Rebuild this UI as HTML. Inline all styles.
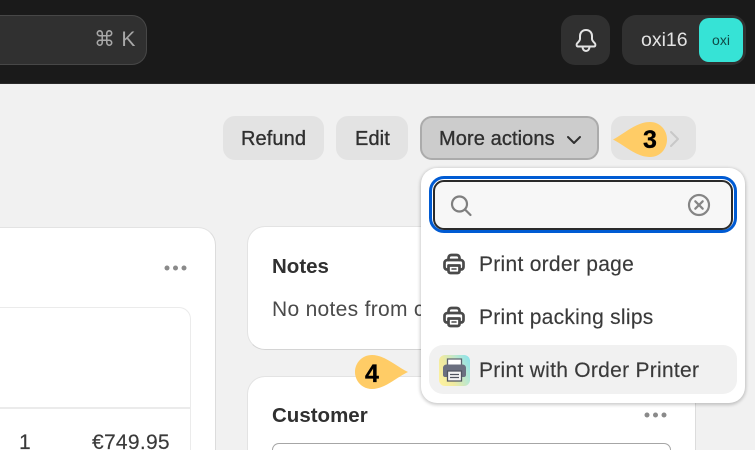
<!DOCTYPE html>
<html><head><meta charset="utf-8">
<style>
html,body{margin:0;padding:0;width:755px;height:450px;overflow:hidden;}
body{background:#f1f1f1;font-family:"Liberation Sans",sans-serif;color:#303030;}
#p{position:absolute;left:0;top:0;width:755px;height:450px;overflow:hidden;background:#f1f1f1;}
.a{position:absolute;box-sizing:border-box;}
.t{position:absolute;white-space:nowrap;line-height:24px;font-size:20px;}
.m{font-size:21px;letter-spacing:.28px;color:#3a3a3a;-webkit-text-stroke:.15px #3a3a3a;}
.b{font-size:20px;letter-spacing:.1px;-webkit-text-stroke:.35px #303030;}
.btn{position:absolute;box-sizing:border-box;top:116px;height:44px;border-radius:12px;background:#e3e3e3;}
.card{position:absolute;box-sizing:border-box;background:#fff;border:1px solid #e3e3e3;border-bottom-color:#d4d4d4;border-right-color:#dcdcdc;}
svg{position:absolute;overflow:visible;}
</style></head><body><div id="p">
<div class="a" style="left:0;top:0;width:755px;height:84px;background:#1a1a1a;border-bottom:1px solid #2a2a2a"></div>
<div class="a" style="left:0;top:15px;width:147px;height:50px;background:#303030;border:1px solid #474747;border-left:0;border-radius:0 15px 15px 0"></div>
<div class="t" style="left:94px;top:28px;color:#a8a8a8;font-size:21px;letter-spacing:.3px">⌘ K</div>
<div class="a" style="left:561px;top:15px;width:49px;height:50px;background:#303030;border-radius:14px"></div>
<svg style="left:574px;top:27px" width="24" height="26" viewBox="0 0 24 26" fill="none" stroke="#e3e3e3" stroke-width="2" stroke-linejoin="round" stroke-linecap="round"><path d="M12 3C8.200 3 6 5.800 6 9v2.800c0 2-1.500 3-3 4.700-.8.900-.3 3 .8 3h16.400c1.100 0 1.600-2.100.8-3-1.500-1.700-3-2.700-3-4.700V9c0-3.200-2.200-6-6-6z"/><path d="M8.500 20c.2 2.500 1.600 4 3.500 4s3.300-1.500 3.500-4"/></svg>
<div class="a" style="left:622px;top:15px;width:124px;height:50px;background:#303030;border-radius:14px"></div>
<div class="t" style="left:641px;top:28px;color:#e3e3e3;font-size:19.500px">oxi16</div>
<div class="a" style="left:699px;top:18px;width:44px;height:44px;background:#36e3d6;border-radius:10px"></div>
<div class="t" style="left:699px;width:44px;text-align:center;top:28px;color:#0f4a46;font-size:14px">oxi</div>

<div class="btn" style="left:223px;width:101px"></div>
<div class="t b" style="left:241px;top:127px">Refund</div>
<div class="btn" style="left:336px;width:72px"></div>
<div class="t b" style="left:355px;top:127px">Edit</div>
<div class="btn" style="left:420px;width:179px;background:#cccccc;border:2px solid #ababab"></div>
<div class="t b" style="left:439px;top:127px">More actions</div>
<svg style="left:566px;top:134px" width="16" height="12" viewBox="0 0 16 12" fill="none" stroke="#303030" stroke-width="2" stroke-linecap="round" stroke-linejoin="round"><path d="M2 3l6 6 6-6"/></svg>
<div class="btn" style="left:611px;width:85px"></div>
<svg style="left:669px;top:130px" width="12" height="18" viewBox="0 0 12 18" fill="none" stroke="#c8c8c8" stroke-width="2" stroke-linecap="round" stroke-linejoin="round"><path d="M2 2l7 7-7 7"/></svg>
<svg style="left:610px;top:120px" width="60" height="40" viewBox="0 0 60 40"><path d="M3 19.500C14 14 26 2 40 2c10 0 17 8 17 17.500S50 37 40 37C26 37 14 25 3 19.500z" fill="#ffcc66"/></svg>
<div class="t" style="left:641px;top:128px;font-weight:700;font-size:25px;color:#000;width:18px;text-align:center;-webkit-text-stroke:.3px #000">3</div>

<div class="card" style="left:0;top:227px;width:216px;height:223px;border-left:0;border-bottom:0;border-radius:0 18px 0 0"></div>
<svg style="left:164px;top:263px" width="24" height="10"><circle cx="3" cy="5" r="2.500" fill="#8a8a8a"/><circle cx="11.500" cy="5" r="2.500" fill="#8a8a8a"/><circle cx="20" cy="5" r="2.500" fill="#8a8a8a"/></svg>
<div class="a" style="left:0;top:307px;width:191px;height:143px;border:1px solid #ebebeb;border-left:0;border-bottom:0;border-radius:0 12px 0 0"></div>
<div class="a" style="left:0;top:407px;width:190px;height:2px;background:#ebebeb"></div>
<div class="t m" style="left:19px;top:431px;height:19px;overflow:hidden">1</div>
<div class="t m" style="left:92px;top:431px;height:19px;overflow:hidden">€749.95</div>

<div class="card" style="left:247px;top:226px;width:449px;height:124px;border-radius:18px"></div>
<div class="t" style="left:272px;top:255px;font-weight:700;font-size:20.500px">Notes</div>
<div class="t" style="left:272px;top:298px;font-size:21px;letter-spacing:.3px;color:#4a4a4a">No notes from c</div>
<div class="card" style="left:247px;top:376px;width:449px;height:74px;border-bottom:0;border-radius:18px 18px 0 0"></div>
<div class="t" style="left:272px;top:404px;font-weight:700;font-size:20.500px">Customer</div>
<svg style="left:644px;top:410px" width="24" height="10"><circle cx="3" cy="5" r="2.500" fill="#8a8a8a"/><circle cx="11.500" cy="5" r="2.500" fill="#8a8a8a"/><circle cx="20" cy="5" r="2.500" fill="#8a8a8a"/></svg>
<div class="a" style="left:272px;top:443px;width:399px;height:7px;border:1px solid #a6a6a6;border-bottom:0;border-radius:12px 12px 0 0;background:#fff"></div>

<svg style="left:352px;top:352px" width="60" height="40" viewBox="0 0 60 40"><path d="M56 20C45 15 33 3 20 3 10 3 3 11 3 20s7 17 17 17c13 0 25-12 36-17z" fill="#ffcc66"/></svg>
<div class="t" style="left:363px;top:362px;font-weight:700;font-size:25px;color:#000;width:18px;text-align:center;-webkit-text-stroke:.3px #000">4</div>

<div class="a" style="left:421px;top:168px;width:324px;height:235px;background:#fff;border-radius:16px;box-shadow:0 1px 3px 1px rgba(0,0,0,.2)"></div>
<div class="a" style="left:429px;top:176px;width:308px;height:57px;border:3px solid #005bd3;border-radius:15px;background:#fff"></div>
<div class="a" style="left:433px;top:180px;width:300px;height:50px;border:2px solid #2a2a2a;border-radius:11px;background:#f7f7f7"></div>
<svg style="left:450px;top:194px" width="24" height="24" viewBox="0 0 24 24" fill="none" stroke="#7f7f7f" stroke-width="2.200" stroke-linecap="round"><circle cx="9.500" cy="10" r="7.500"/><path d="M15 15.500L20.500 21"/></svg>
<svg style="left:687px;top:193px" width="24" height="24" viewBox="0 0 24 24" fill="none" stroke="#858585" stroke-width="2.200" stroke-linecap="round"><circle cx="12" cy="12" r="10"/><path d="M8.300 8.300l7.400 7.400M15.700 8.300l-7.400 7.400"/></svg>

<svg style="left:443px;top:253px" width="22" height="22" viewBox="0 0 22 22" fill="none" stroke="#4a4a4a" stroke-width="2.700" stroke-linejoin="round" stroke-linecap="round"><path d="M5.500 7V5C5.500 3 6.800 2 8.500 2h5c1.700 0 3 1 3 3v2"/><path d="M5 16.500H4C2.500 16.500 1.500 15.500 1.500 14v-4c0-1.700 1.300-3 3-3h13c1.700 0 3 1.300 3 3v4c0 1.500-1 2.500-2.500 2.500h-1"/><path d="M5.500 12.500h11v5.500c0 1.300-.8 2-2 2h-7c-1.200 0-2-.7-2-2z"/><path d="M9 16h4" stroke-width="1.500"/></svg>
<div class="t m" style="left:479px;top:253px">Print order page</div>
<svg style="left:443px;top:306px" width="22" height="22" viewBox="0 0 22 22" fill="none" stroke="#4a4a4a" stroke-width="2.700" stroke-linejoin="round" stroke-linecap="round"><path d="M5.500 7V5C5.500 3 6.800 2 8.500 2h5c1.700 0 3 1 3 3v2"/><path d="M5 16.500H4C2.500 16.500 1.500 15.500 1.500 14v-4c0-1.700 1.300-3 3-3h13c1.700 0 3 1.300 3 3v4c0 1.500-1 2.500-2.500 2.500h-1"/><path d="M5.500 12.500h11v5.500c0 1.300-.8 2-2 2h-7c-1.200 0-2-.7-2-2z"/><path d="M9 16h4" stroke-width="1.500"/></svg>
<div class="t m" style="left:479px;top:306px">Print packing slips</div>
<div class="a" style="left:429px;top:345px;width:308px;height:49px;background:#f1f1f1;border-radius:14px"></div>
<div class="a" style="left:439px;top:355px;width:31px;height:31px;border-radius:6px;background:linear-gradient(65deg,#fff3a0 0%,#f0eaa0 35%,#bfe8cc 65%,#85e2ee 100%)"></div>
<svg style="left:443px;top:358px" width="23" height="24" viewBox="0 0 23 24"><path d="M4.500 1h14v7h-14z" fill="#fff" stroke="#5f6470" stroke-width="1.300"/><path d="M0 10c0-2 1.500-3.500 3.500-3.500h16c2 0 3.500 1.500 3.500 3.500v7c0 1-.7 2-2 2H2c-1.300 0-2-1-2-2z" fill="#6b7080"/><path d="M4.500 13h14v10h-14z" fill="#f4f4f4" stroke="#50545f" stroke-width="1.300"/><path d="M7 16.500h9M7 19.500h9" stroke="#50545f" stroke-width="1.200"/></svg>
<div class="t m" style="left:479px;top:359px">Print with Order Printer</div>
</div></body></html>
